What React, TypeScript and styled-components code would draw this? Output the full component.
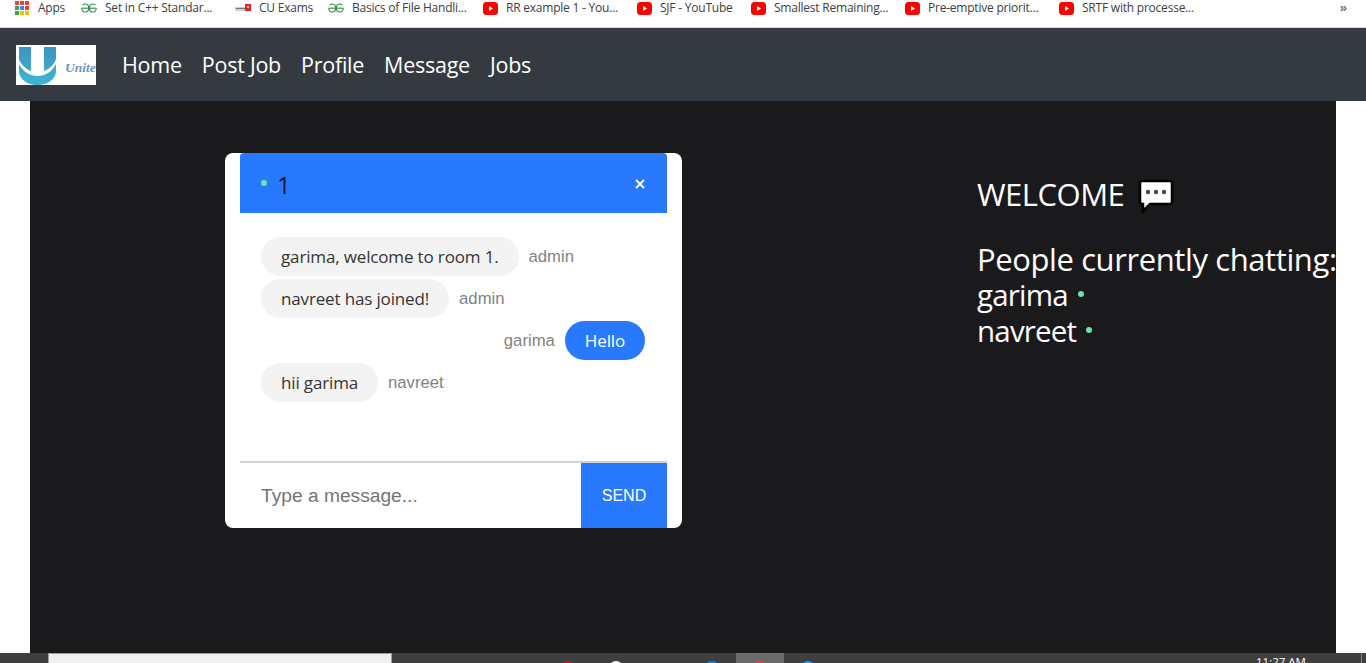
import styled, { createGlobalStyle } from "styled-components";

const GlobalStyle = createGlobalStyle`
  html, body {
    margin: 0;
    padding: 0;
    height: 100%;
    overflow: hidden;
    background: #fff;
  }
  * { box-sizing: border-box; }
`;

const SEGOE = `"Open Sans", "Noto Sans", sans-serif`;
const ARIAL = `"Liberation Sans", Arial, sans-serif`;

const Page = styled.div`
  display: flex;
  flex-direction: column;
  width: 1366px;
  height: 663px;
  overflow: hidden;
`;

const BookmarkBar = styled.div`
  display: flex;
  align-items: center;
  flex: 0 0 28px;
  height: 28px;
  padding: 0 0 11px 15px;
  background: #fff;
  border-bottom: 1px solid #dadce0;
`;

const Bookmark = styled.div<{ $gap: number }>`
  display: flex;
  align-items: center;
  margin-right: ${({ $gap }) => $gap}px;
`;

const BookmarkLabel = styled.span<{ $w: number; $ml: number }>`
  width: ${({ $w }) => $w}px;
  margin-left: ${({ $ml }) => $ml}px;
  font: 12px/14px ${SEGOE};
  letter-spacing: -0.22px;
  color: #3c4043;
  white-space: nowrap;
`;

const AppsGrid = styled.div`
  display: grid;
  grid-template-columns: repeat(3, 4px);
  gap: 1px;
  width: 14px;
`;

const AppsDot = styled.i<{ $c: string }>`
  display: block;
  width: 4px;
  height: 4px;
  background: ${({ $c }) => $c};
`;

const More = styled.span`
  margin-left: auto;
  margin-right: 19px;
  font: bold 13px/14px ${ARIAL};
  color: #6e6e6e;
`;

const Navbar = styled.nav`
  display: flex;
  align-items: center;
  flex: 0 0 73px;
  padding: 0 16px 0;
  background: #343a40;
`;

const Logo = styled.div`
  display: flex;
  width: 80px;
  height: 40px;
  margin-top: 1px;
  margin-right: 16px;
  background: #fff;
`;

const NavLink = styled.a`
  padding: 0 10px;
  font: 21.5px/32px ${SEGOE};
  letter-spacing: -0.25px;
  color: #fff;
`;

const Main = styled.main`
  display: flex;
  flex: 1;
  margin: 0 30px;
  padding: 52px 0 0 195px;
  background: #1a1a1d;
  overflow: hidden;
  min-height: 0;
`;

const ChatCard = styled.section`
  display: flex;
  flex-direction: column;
  flex: 0 0 457px;
  height: 375px;
  padding: 0 15px;
  background: #fff;
  border-radius: 8px;
`;

const ChatHeader = styled.header`
  display: flex;
  align-items: center;
  justify-content: space-between;
  flex: 0 0 60px;
  padding: 0 21px;
  background: #2979ff;
  border-radius: 4px 4px 0 0;
`;

const RoomName = styled.div`
  display: flex;
  align-items: center;
  padding-top: 3px;
  font: 24px ${SEGOE};
  color: #00123a;
`;

const OnlineDot = styled.i`
  display: inline-block;
  width: 6px;
  height: 6px;
  border-radius: 50%;
  background: #69e6a6;
`;

const HeaderDot = styled(OnlineDot)`
  margin-right: 10px;
  margin-top: -3px;
`;

const CloseIcon = styled.svg`
  display: block;
  width: 10px;
  height: 10px;
  margin-right: 1px;
  margin-top: 2px;
`;

const Messages = styled.div`
  flex: 1;
  display: flex;
  flex-direction: column;
  gap: 3px;
  padding: 24px 22px 0 21px;
`;

const MessageRow = styled.div<{ $mine?: boolean }>`
  display: flex;
  align-items: center;
  justify-content: ${({ $mine }) => ($mine ? "flex-end" : "flex-start")};
`;

const Bubble = styled.div<{ $mine?: boolean }>`
  height: 39px;
  padding: 0 20px;
  border-radius: 20px;
  background: ${({ $mine }) => ($mine ? "#2979ff" : "#f3f3f3")};
  color: ${({ $mine }) => ($mine ? "#fff" : "#353535")};
  font: 17px/40px ${SEGOE};
  letter-spacing: -0.15px;
  white-space: nowrap;
`;

const Sender = styled.span<{ $mine?: boolean }>`
  margin: ${({ $mine }) => ($mine ? "0 10px 0 0" : "0 0 0 10px")};
  font: 16.7px ${ARIAL};
  color: #828282;
`;

const InputForm = styled.form`
  display: flex;
  flex: 0 0 67px;
  border-top: 2px solid #d3d3d3;
`;

const MessageInput = styled.input`
  flex: 1;
  min-width: 0;
  padding: 0 21px;
  border: none;
  outline: none;
  background: transparent;
  font: 19.2px ${ARIAL};
  &::placeholder {
    color: #757575;
    opacity: 1;
  }
`;

const SendButton = styled.button`
  flex: 0 0 86px;
  border: none;
  padding: 0;
  background: #2979ff;
  color: #fff;
  font: 16px ${ARIAL};
  text-transform: uppercase;
`;

const Side = styled.aside`
  flex: 1;
  min-width: 0;
  margin-left: 295px;
  padding-top: 19px;
  color: #fff;
  font-family: ${SEGOE};
  white-space: nowrap;
`;

const WelcomeTitle = styled.h1`
  display: flex;
  align-items: center;
  margin: 0 0 24px;
  font: 400 31px/44px ${SEGOE};
  letter-spacing: -0.5px;
`;

const ChatIcon = styled.svg`
  display: block;
  width: 36px;
  height: 34px;
  margin-left: 14px;
  margin-top: 4px;
`;

const SideHeading = styled.h2`
  margin: 0 0 -1px;
  font: 400 31px/38px ${SEGOE};
  letter-spacing: -0.4px;
`;

const Person = styled.div`
  display: flex;
  align-items: center;
  font: 29.5px/36px ${SEGOE};
  letter-spacing: -0.8px;
`;

const PersonDot = styled(OnlineDot)`
  margin-left: 10px;
  margin-top: -3px;
`;

const Taskbar = styled.footer`
  display: flex;
  flex: 0 0 10px;
  background: #3f3f3f;
  overflow: hidden;
`;

const SearchBox = styled.div`
  flex: 0 0 344px;
  margin-left: 48px;
  margin-right: 8px;
  background: #f0f0f0;
  border: 1px solid #a0a0a0;
  border-bottom: none;
`;

const TaskSlot = styled.div<{ $active?: boolean }>`
  display: flex;
  justify-content: center;
  flex: 0 0 48px;
  background: ${({ $active }) => ($active ? "#6b6b6b" : "transparent")};
`;

const TaskGlyph = styled.i<{ $c: string }>`
  display: block;
  width: 14px;
  height: 14px;
  margin-top: 8px;
  border-radius: 50%;
  background: ${({ $c }) => $c};
`;

const Clock = styled.div`
  margin-left: 424px;
  padding-top: 2px;
  font: 11.5px/14px ${SEGOE};
  color: #fff;
  white-space: nowrap;
`;

const DesktopEdge = styled.div`
  margin-left: auto;
  margin-right: 4px;
  width: 1px;
  background: #8a8a8a;
`;

const ytIcon = (
  <svg width="15" height="13" viewBox="0 0 15 13">
    <rect width="15" height="13" rx="3.5" fill="#f00" />
    <path d="M6 4l4 2.5L6 9z" fill="#fff" />
  </svg>
);

const gfgIcon = (
  <svg width="16" height="10" viewBox="0 0 16 10" fill="none" stroke="#2f8d46" strokeWidth="1.1">
    <path d="M.5 5.2h15" />
    <path d="M1.6 2.2C2.4 1.3 3.3 1 4.2 1 6.2 1 7.7 2.7 7.7 5S6.2 9 4.2 9C2.4 9 1 7.6.7 5.2" />
    <path d="M14.4 2.2C13.6 1.3 12.7 1 11.8 1 9.8 1 8.3 2.7 8.3 5s1.5 4 3.5 4c1.8 0 3.2-1.4 3.5-3.8" />
  </svg>
);

const cuIcon = (
  <svg width="16" height="9" viewBox="0 0 16 9">
    <rect x="0" y="3" width="11" height="4" fill="#cfcfcf" />
    <rect x="1" y="4" width="9" height="1" fill="#777" />
    <rect x="10" y="0" width="6" height="7" fill="#e8202e" />
    <rect x="12" y="2" width="2" height="2" fill="#f7b5b5" />
  </svg>
);

const appsColors = [
  "#ea4335", "#ea4335", "#ea4335",
  "#34a853", "#4285f4", "#ea4335",
  "#34a853", "#fbbc04", "#fbbc04",
];

const bookmarks = [
  { icon: gfgIcon, label: "Set in C++ Standar...", w: 110, ml: 8, gap: 20 },
  { icon: cuIcon, label: "CU Exams", w: 52, ml: 8, gap: 17 },
  { icon: gfgIcon, label: "Basics of File Handli...", w: 115, ml: 8, gap: 16 },
  { icon: ytIcon, label: "RR example 1 - You...", w: 112, ml: 8, gap: 19 },
  { icon: ytIcon, label: "SJF - YouTube", w: 74, ml: 8, gap: 17 },
  { icon: ytIcon, label: "Smallest Remaining...", w: 112, ml: 8, gap: 19 },
  { icon: ytIcon, label: "Pre-emptive priorit...", w: 110, ml: 8, gap: 21 },
  { icon: ytIcon, label: "SRTF with processe...", w: 110, ml: 8, gap: 0 },
];

const navItems = ["Home", "Post Job", "Profile", "Message", "Jobs"];

const taskColors = ["", "", "", "#e81123", "#ffffff", "", "#0a84d8", "#e2453a", "#1c9be6"];

const App = () => {
  return (
    <Page>
      <GlobalStyle />
      <BookmarkBar>
        <Bookmark $gap={16}>
          <AppsGrid>
            {appsColors.map((c, i) => (
              <AppsDot key={i} $c={c} />
            ))}
          </AppsGrid>
          <BookmarkLabel $w={27} $ml={9}>
            Apps
          </BookmarkLabel>
        </Bookmark>
        {bookmarks.map((b) => (
          <Bookmark key={b.label} $gap={b.gap}>
            {b.icon}
            <BookmarkLabel $w={b.w} $ml={b.ml}>
              {b.label}
            </BookmarkLabel>
          </Bookmark>
        ))}
        <More>»</More>
      </BookmarkBar>

      <Navbar>
        <Logo>
          <svg width="80" height="40" viewBox="0 0 80 40">
            <defs>
              <linearGradient id="uGrad" gradientUnits="userSpaceOnUse" x1="0" y1="2" x2="0" y2="40">
                <stop offset="0" stopColor="#3f94bf" />
                <stop offset="1" stopColor="#3cb6d3" />
              </linearGradient>
            </defs>
            <path d="M3 2H15V26C10 24 5 20 3 14Z" fill="url(#uGrad)" />
            <path d="M40 2H28V26C33 24 38 20 40 14Z" fill="url(#uGrad)" />
            <path
              d="M3 19C7 27 14 31 21.5 31C29 31 36 27 40 19V26C40 34 32 40 21.5 40C11 40 3 34 3 26Z"
              fill="url(#uGrad)"
            />
            <text
              x="49"
              y="27"
              fontFamily='"Liberation Serif", serif'
              fontStyle="italic"
              fontWeight="700"
              fontSize="13.5"
              fill="#6d97c4"
            >
              Unite
            </text>
          </svg>
        </Logo>
        {navItems.map((item) => (
          <NavLink key={item}>{item}</NavLink>
        ))}
      </Navbar>

      <Main>
        <ChatCard>
          <ChatHeader>
            <RoomName>
              <HeaderDot />1
            </RoomName>
            <CloseIcon viewBox="0 0 10 10">
              <path d="M1 1l8 8M9 1l-8 8" stroke="#fff" strokeWidth="2" />
            </CloseIcon>
          </ChatHeader>
          <Messages>
            <MessageRow>
              <Bubble>garima, welcome to room 1.</Bubble>
              <Sender>admin</Sender>
            </MessageRow>
            <MessageRow>
              <Bubble>navreet has joined!</Bubble>
              <Sender>admin</Sender>
            </MessageRow>
            <MessageRow $mine>
              <Sender $mine>garima</Sender>
              <Bubble $mine>Hello</Bubble>
            </MessageRow>
            <MessageRow>
              <Bubble>hii garima</Bubble>
              <Sender>navreet</Sender>
            </MessageRow>
          </Messages>
          <InputForm>
            <MessageInput placeholder="Type a message..." />
            <SendButton type="button">Send</SendButton>
          </InputForm>
        </ChatCard>

        <Side>
          <WelcomeTitle>
            WELCOME
            <ChatIcon viewBox="0 0 36 34">
              <path
                d="M4 2h28a2 2 0 0 1 2 2v19a2 2 0 0 1-2 2H12l-7 7v-7H4a2 2 0 0 1-2-2V4a2 2 0 0 1 2-2z"
                fill="#fff"
                stroke="#000"
                strokeWidth="2.5"
              />
              <circle cx="10" cy="13" r="2.2" fill="#444" />
              <circle cx="18" cy="13" r="2.2" fill="#444" />
              <circle cx="26" cy="13" r="2.2" fill="#444" />
            </ChatIcon>
          </WelcomeTitle>
          <SideHeading>People currently chatting:</SideHeading>
          <Person>
            garima
            <PersonDot />
          </Person>
          <Person>
            navreet
            <PersonDot />
          </Person>
        </Side>
      </Main>

      <Taskbar>
        <SearchBox />
        {taskColors.map((c, i) => (
          <TaskSlot key={i} $active={i === 7}>
            {c && <TaskGlyph $c={c} />}
          </TaskSlot>
        ))}
        <Clock>11:27 AM</Clock>
        <DesktopEdge />
      </Taskbar>
    </Page>
  );
};

export default App;
